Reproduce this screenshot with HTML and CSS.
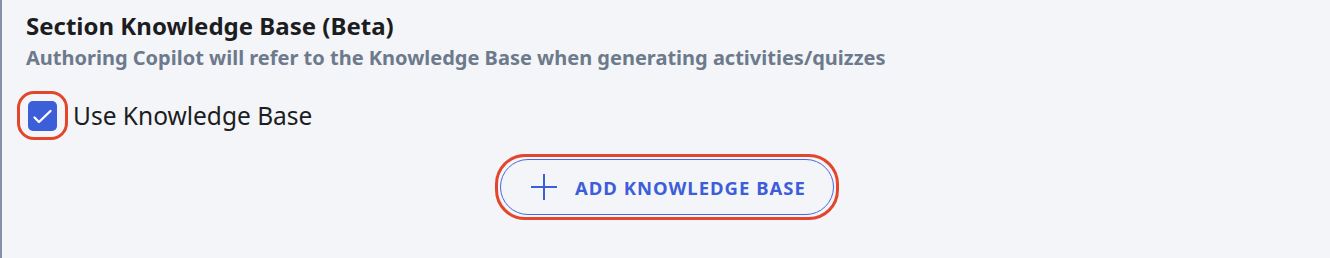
FILE: index.html
```html
<!DOCTYPE html>
<html>
<head>
<meta charset="utf-8">
<link rel="stylesheet" href="styles.css">
</head>
<body>
<div class="panel">
  <h2 class="title">Section Knowledge Base (Beta)</h2>
  <p class="subtitle">Authoring Copilot will refer to the Knowledge Base when generating activities/quizzes</p>
  <label class="check-row">
    <span class="ring">
      <span class="box">
        <svg viewBox="0 0 29 30" width="29" height="30"><path d="M6.5 16.5L11 21L22.5 10" fill="none" stroke="#fff" stroke-width="2.3" stroke-linecap="round" stroke-linejoin="round"/></svg>
      </span>
    </span>
    <span class="check-label">Use Knowledge Base</span>
  </label>
  <div class="actions">
    <span class="btn-ring">
      <button class="btn">
        <svg viewBox="0 0 26 26" width="26" height="26"><path d="M13 0v26M0 13h26" stroke="#3d5ed8" stroke-width="2" fill="none"/></svg>
        <span>ADD KNOWLEDGE BASE</span>
      </button>
    </span>
  </div>
</div>
</body>
</html>
```
FILE: styles.css
```css
html, body {
  margin: 0;
  padding: 0;
  height: 100%;
}
body {
  background: #f4f5f9;
  font-family: "Noto Sans", "Open Sans", sans-serif;
}
.panel {
  box-sizing: border-box;
  height: 258px;
  border-left: 2px solid #8392aa;
  padding: 10px 22px 0 24px;
}
.title {
  margin: 0;
  font-size: 24px;
  font-weight: 700;
  color: #1c1d21;
  line-height: 32px;
}
.subtitle {
  margin: 2px 0 0 0;
  font-size: 20px;
  font-weight: 700;
  color: #6d7a8c;
  line-height: 28px;
}
.check-row {
  display: flex;
  align-items: center;
  margin-top: 19px;
  margin-left: -9px;
}
.ring {
  display: flex;
  align-items: center;
  justify-content: center;
  width: 45px;
  height: 43px;
  border: 3px solid #e4462b;
  border-radius: 17px;
}
.box {
  display: flex;
  width: 29px;
  height: 30px;
  background: #3c5ed8;
  border-radius: 5px;
}
.check-label {
  margin-left: 5px;
  font-size: 24.5px;
  color: #1c1d21;
}
.actions {
  display: flex;
  justify-content: center;
  margin-top: 14px;
}
.btn-ring {
  display: inline-flex;
  border: 3px solid #e4462b;
  border-radius: 30px;
  padding: 2px;
}
.btn {
  display: flex;
  align-items: center;
  gap: 18px;
  width: 334px;
  height: 56px;
  box-sizing: border-box;
  padding: 0 0 0 30px;
  background: transparent;
  border: 1px solid #4a67dc;
  border-radius: 28px;
  font-family: "Noto Sans", "Open Sans", sans-serif;
  font-weight: 700;
  font-size: 18.5px;
  letter-spacing: 1px;
  color: #3d5ed8;
}
```
